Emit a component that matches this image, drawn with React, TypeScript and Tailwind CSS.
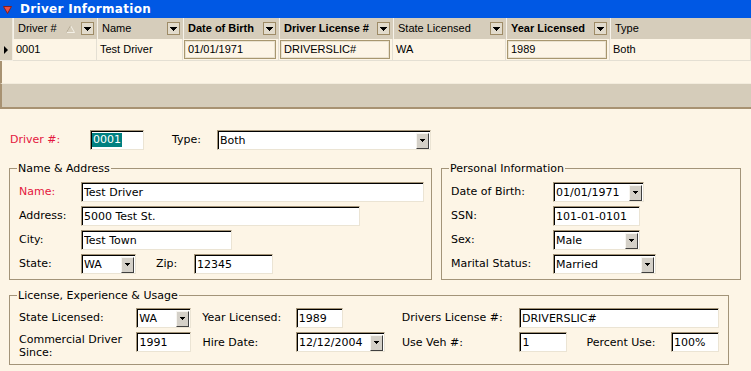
import React from 'react';

const sunken =
  "border border-t-[#a39377] border-l-[#a39377] border-r-[#ebe4d4] border-b-[#ebe4d4] shadow-[inset_1px_1px_0_#000] bg-white";

function SmallArrow() {
  return (
    <svg width="5" height="3" viewBox="0 0 5 3" className="block" shapeRendering="crispEdges">
      <rect x="0" y="0" width="5" height="1" fill="#000" />
      <rect x="1" y="1" width="3" height="1" fill="#000" />
      <rect x="2" y="2" width="1" height="1" fill="#000" />
    </svg>
  );
}

function BigArrow() {
  return (
    <svg width="7" height="4" viewBox="0 0 7 4" className="block" shapeRendering="crispEdges">
      <rect x="0" y="0" width="7" height="1" fill="#000" />
      <rect x="1" y="1" width="5" height="1" fill="#000" />
      <rect x="2" y="2" width="3" height="1" fill="#000" />
      <rect x="3" y="3" width="1" height="1" fill="#000" />
    </svg>
  );
}

function DropBtn() {
  return (
    <div className="w-[13px] h-[16px] shrink-0 bg-[#d4d0c8] border border-t-[#f7f5f0] border-l-[#f7f5f0] border-r-[#404040] border-b-[#404040] flex items-center justify-center">
      <SmallArrow />
    </div>
  );
}

function Field({
  w,
  children,
  sel = false,
}: {
  w: string;
  children?: React.ReactNode;
  sel?: boolean;
}) {
  return (
    <div className={`${w} h-[20px] ${sunken} flex items-center pl-[2px] shrink-0`}>
      <span className="flex-1 whitespace-nowrap overflow-hidden leading-[13px]">{children}</span>
      {sel && <div className="mr-[1px] mt-[1px]"><DropBtn /></div>}
    </div>
  );
}

function HeadBtn() {
  return (
    <div className="w-[13px] h-[13px] shrink-0 border border-[#9e8b66] bg-[#e2dbcc] flex items-center justify-center">
      <BigArrow />
    </div>
  );
}

function HeadCell({
  w,
  label,
  bold = false,
  sort = false,
  btn = true,
}: {
  w: string;
  label: string;
  bold?: boolean;
  sort?: boolean;
  btn?: boolean;
}) {
  return (
    <div className={`${w} h-full flex items-center pl-[4px] pr-[3px] border-l border-l-[#f6f2ea] shrink-0`}>
      <span className={`${bold ? 'font-bold' : ''} whitespace-nowrap`}>{label}</span>
      <div className="ml-auto flex items-center gap-[6px]">
        {sort && (
          <svg width="9" height="8" viewBox="0 0 9 8" className="block">
            <path d="M4.5 0.5 L8.5 7.5 L0.5 7.5 Z" fill="none" stroke="#f4f0e6" strokeWidth="1" />
            <path d="M4.5 0.5 L0.5 7.5" stroke="#b0a58c" strokeWidth="1" />
          </svg>
        )}
        {btn && <HeadBtn />}
      </div>
    </div>
  );
}

function DataCell({ w, children, boxed = false }: { w: string; children?: React.ReactNode; boxed?: boolean }) {
  return (
    <div className={`${w} h-full border-r border-r-[#e4dfd3] border-b border-b-[#e4dfd3] shrink-0 flex items-center`}>
      {boxed ? (
        <div className="ml-[1px] mr-[2px] my-[1px] flex-1 self-stretch border border-[#a8976f] shadow-[inset_1px_1px_0_#e9e1cf,inset_-1px_-1px_0_#e9e1cf] flex items-center pl-[3px]">
          {children}
        </div>
      ) : (
        <span className="pl-[3px]">{children}</span>
      )}
    </div>
  );
}

export default function App() {
  return (
    <div className="w-[751px] h-[371px] bg-[#fdf5e6] overflow-hidden font-['DejaVu_Sans',sans-serif] text-[11px] text-black">
      {/* Title bar */}
      <div className="h-[18px] bg-[#0058e4] flex items-center">
        <svg width="9" height="9" viewBox="0 0 9 9" className="ml-[3px] block">
          <path d="M0.5 1.5 H8.5 L4.5 8.5 Z" fill="#e8504a" stroke="#8a1e1a" strokeWidth="1" />
        </svg>
        <span className="ml-[8px] text-white font-bold text-[12px] leading-[14px] tracking-[0.3px]">Driver Information</span>
      </div>

      {/* Grid */}
      <div className="font-['Liberation_Sans',Arial,sans-serif] text-[11px]">
        <div className="h-[21px] bg-[#d6cdbb] flex">
          <div className="w-[13px] h-full shrink-0 border-r border-r-[#efe9dc]" />
          <HeadCell w="w-[84px]" label="Driver #" sort />
          <HeadCell w="w-[86px]" label="Name" />
          <HeadCell w="w-[96px]" label="Date of Birth" bold />
          <HeadCell w="w-[114px]" label="Driver License #" bold />
          <HeadCell w="w-[113px]" label="State Licensed" />
          <HeadCell w="w-[104px]" label="Year Licensed" bold />
          <HeadCell w="w-[141px]" label="Type" btn={false} />
        </div>
        <div className="h-[22px] flex">
          <div className="w-[13px] h-full shrink-0 bg-[#d6cdbb] border-r border-r-[#f2ede2] border-b border-b-[#f2ede2] flex items-center pl-[4px]">
            <svg width="4" height="8" viewBox="0 0 4 8" className="block">
              <path d="M0 0 L4 4 L0 8 Z" fill="#000" />
            </svg>
          </div>
          <DataCell w="w-[84px]">0001</DataCell>
          <DataCell w="w-[86px]">Test Driver</DataCell>
          <DataCell w="w-[96px]" boxed>01/01/1971</DataCell>
          <DataCell w="w-[114px]" boxed>DRIVERSLIC#</DataCell>
          <DataCell w="w-[113px]">WA</DataCell>
          <DataCell w="w-[104px]" boxed>1989</DataCell>
          <DataCell w="w-[141px]">Both</DataCell>
        </div>
        <div className="h-[22px] border-l-2 border-l-[#a89272]" />
        <div className="h-[26px] bg-[#d5ccba] border-l-2 border-l-[#a89272] border-b-2 border-b-[#a89272] border-t border-t-[#f3ecdd]" />
      </div>

      {/* Driver # / Type */}
      <div className="mt-[21px] flex items-center pl-[10px]">
        <span className="w-[80px] text-[#e4173e]">Driver #:</span>
        <div className={`w-[54px] h-[20px] ${sunken} flex items-center pl-[1px]`}>
          <span className="bg-[#008080] text-white leading-[14px] px-[1px]">0001</span>
        </div>
        <span className="ml-[28px] w-[45px]">Type:</span>
        <Field w="w-[214px]" sel>Both</Field>
      </div>

      {/* Name & Address / Personal */}
      <div className="mt-[12px] ml-[9px] flex items-stretch">
        <fieldset className="w-[423px] min-w-0 border border-[#a39479] pl-[9px] pr-[6px] pt-[7px] pb-[5px]">
          <legend className="-ml-[2px] px-[1px] leading-[13px]">Name &amp; Address</legend>
          <div className="flex flex-col gap-[4px]">
            <div className="flex items-center">
              <span className="w-[62px] text-[#e4173e]">Name:</span>
              <Field w="w-[343px]">Test Driver</Field>
            </div>
            <div className="flex items-center">
              <span className="w-[62px]">Address:</span>
              <Field w="w-[279px]">5000 Test St.</Field>
            </div>
            <div className="flex items-center">
              <span className="w-[62px]">City:</span>
              <Field w="w-[151px]">Test Town</Field>
            </div>
            <div className="flex items-center">
              <span className="w-[62px]">State:</span>
              <Field w="w-[55px]" sel>WA</Field>
              <span className="ml-[20px] w-[38px]">Zip:</span>
              <Field w="w-[79px]">12345</Field>
            </div>
          </div>
        </fieldset>

        <fieldset className="ml-[9px] w-[300px] min-w-0 border border-[#a39479] px-[9px] pt-[7px] pb-[5px]">
          <legend className="-ml-[2px] px-[1px] leading-[13px]">Personal Information</legend>
          <div className="flex flex-col gap-[4px]">
            <div className="flex items-center">
              <span className="w-[102px]">Date of Birth:</span>
              <Field w="w-[91px]" sel>01/01/1971</Field>
            </div>
            <div className="flex items-center">
              <span className="w-[102px]">SSN:</span>
              <Field w="w-[87px]">101-01-0101</Field>
            </div>
            <div className="flex items-center">
              <span className="w-[102px]">Sex:</span>
              <Field w="w-[87px]" sel>Male</Field>
            </div>
            <div className="flex items-center">
              <span className="w-[102px]">Marital Status:</span>
              <Field w="w-[103px]" sel>Married</Field>
            </div>
          </div>
        </fieldset>
      </div>

      {/* License, Experience & Usage */}
      <fieldset className="mt-[9px] ml-[9px] w-[720px] min-w-0 border border-[#a39479] px-[9px] pt-[6px] pb-[5px]">
        <legend className="-ml-[2px] px-[1px] leading-[13px]">License, Experience &amp; Usage</legend>
        <div className="flex flex-col gap-[4px]">
          <div className="flex items-center">
            <span className="w-[118px]">State Licensed:</span>
            <Field w="w-[55px]" sel>WA</Field>
            <span className="ml-[11px] w-[94px]">Year Licensed:</span>
            <Field w="w-[47px]">1989</Field>
            <span className="ml-[59px] w-[118px]">Drivers License #:</span>
            <Field w="w-[200px]">DRIVERSLIC#</Field>
          </div>
          <div className="flex items-start">
            <span className="w-[118px] leading-[13px] mt-[1px]">
              Commercial Driver
              <br />
              Since:
            </span>
            <Field w="w-[55px]">1991</Field>
            <span className="ml-[11px] w-[94px] mt-[3px]">Hire Date:</span>
            <Field w="w-[89px]" sel>12/12/2004</Field>
            <span className="ml-[17px] w-[118px] mt-[3px]">Use Veh #:</span>
            <Field w="w-[48px]">1</Field>
            <span className="ml-[19px] w-[85px] mt-[3px]">Percent Use:</span>
            <Field w="w-[48px]">100%</Field>
          </div>
        </div>
      </fieldset>
    </div>
  );
}
